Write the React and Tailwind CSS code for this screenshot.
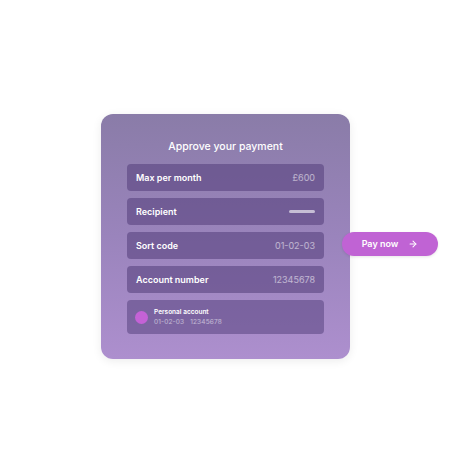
import { ArrowRight } from 'lucide-react';

const ROWS = [
  { label: 'Max per month', value: '£600' },
  { label: 'Recipient', value: null },
  { label: 'Sort code', value: '01-02-03' },
  { label: 'Account number', value: '12345678' },
];

function Row({ label, value }) {
  return (
    <div className="flex items-center justify-between h-[27px] px-[9px] rounded-[4px] bg-[#58437f]/60">
      <span className="text-[9px] font-semibold text-white">{label}</span>
      {value ? (
        <span className="text-[9px] text-white/55">{value}</span>
      ) : (
        <span className="w-[26px] h-[3px] rounded-full bg-white/60" />
      )}
    </div>
  );
}

export default function App() {
  return (
    <div className="w-[474px] h-[474px] bg-white flex items-start pl-[101px] pt-[114px]"
         style={{ fontFamily: '"Inter", "Noto Sans", sans-serif' }}>
      <div className="relative">
        {/* Payment card */}
        <div className="w-[249px] h-[245px] rounded-[12px] px-[26px] pt-[27px] shadow-[0_2px_10px_rgba(0,0,0,0.08)] bg-linear-to-b from-[#8a7ca8] via-[#9a84bc] to-[#ad8fce]">
          <div className="text-center text-[10.5px] leading-[12px] font-medium text-white mb-[11px]">Approve your payment</div>
          <div className="flex flex-col gap-[7px]">
            {ROWS.map(r => <Row key={r.label} {...r} />)}
            <div className="flex items-center gap-[6px] h-[34px] px-[8px] rounded-[4px] bg-[#58437f]/55">
              <span className="w-[13px] h-[13px] rounded-full bg-[#c462d6]" />
              <div className="flex flex-col gap-[3px] leading-none">
                <span className="text-[6.5px] font-semibold text-white">Personal account</span>
                <span className="text-[6.5px] text-white/55 tracking-wide">01-02-03&nbsp;&nbsp;&nbsp;12345678</span>
              </div>
            </div>
          </div>
        </div>

        {/* Pay now button overlapping card edge */}
        <div className="absolute left-[241px] top-[118px] w-[96px] h-[24px] rounded-full bg-[#c063d4] flex items-center justify-center gap-[10px] text-white shadow-[0_1px_3px_rgba(0,0,0,0.1)]">
          <span className="text-[9px] font-semibold">Pay now</span>
          <ArrowRight className="w-[10px] h-[10px]" strokeWidth={2.5} />
        </div>
      </div>
    </div>
  );
}
